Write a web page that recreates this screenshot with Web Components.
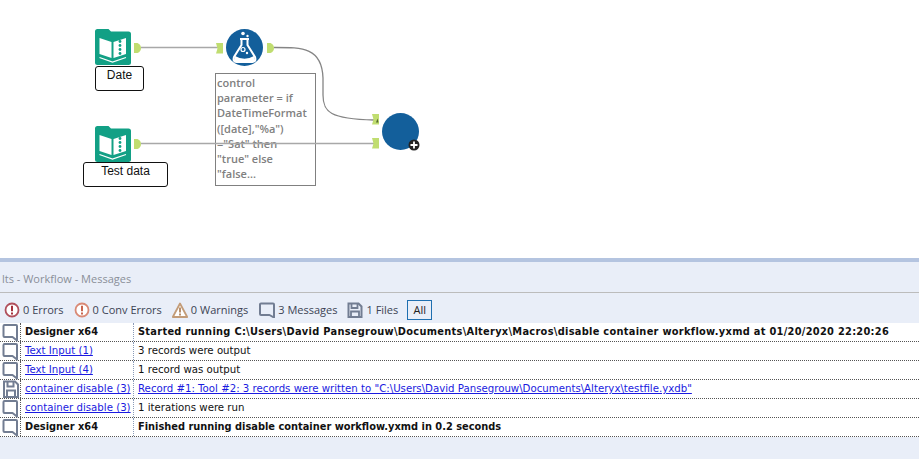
<!DOCTYPE html>
<html>
<head>
<meta charset="utf-8">
<title>Workflow - Messages</title>
<style>
  html, body { margin: 0; padding: 0; background: #fff; }
  body { width: 919px; height: 459px; overflow: hidden; display: flex; flex-direction: column; font-family: "Open Sans", sans-serif; }
</style>
</head>
<body>
<workflow-canvas>
  <tool-node kind="book" style="left:95px;top:29px"></tool-node>
  <tool-node kind="book" style="left:95px;top:126px"></tool-node>
  <tool-node kind="flask" style="left:226px;top:29px"></tool-node>
  <tool-node kind="macro" style="left:382px;top:113px"></tool-node>
  <node-label style="left:95px;top:66px;width:49px;height:25px">Date</node-label>
  <node-label style="left:83px;top:162px;width:85px;height:25px">Test data</node-label>
  <node-note style="left:215px;top:73px;width:98px;height:110px">control<br>parameter = if<br>DateTimeFormat<br>([date],"%a")<br>="Sat" then<br>"true" else<br>"false...</node-note>
</workflow-canvas>
<results-panel>
  <msg-filter slot="filters" kind="error" style="margin-left:4px">0 Errors</msg-filter>
  <msg-filter slot="filters" kind="conv" style="margin-left:10px">0 Conv Errors</msg-filter>
  <msg-filter slot="filters" kind="warn" style="margin-left:10px">0 Warnings</msg-filter>
  <msg-filter slot="filters" kind="msg" style="margin-left:11px">3 Messages</msg-filter>
  <msg-filter slot="filters" kind="file" style="margin-left:10px">1 Files</msg-filter>
  <msg-filter slot="filters" kind="all" style="margin-left:9px">All</msg-filter>

  <msg-row bold kind="msg" source="Designer x64"><span style="letter-spacing:.29px">Started running C:\Users\David Pansegrouw\Documents\Alteryx\Macros\disable container workflow.yxmd at 01/20/2020 22:20:26</span></msg-row>
  <msg-row kind="msg" source="Text Input (1)" link>3 records were output</msg-row>
  <msg-row kind="msg" source="Text Input (4)" link>1 record was output</msg-row>
  <msg-row kind="file" source="container disable (3)" link><a href="#">Record #1: Tool #2: 3 records were written to "C:\Users\David Pansegrouw\Documents\Alteryx\testfile.yxdb"</a></msg-row>
  <msg-row kind="msg" source="container disable (3)" link>1 iterations were run</msg-row>
  <msg-row bold kind="msg" source="Designer x64">Finished running disable container workflow.yxmd in 0.2 seconds</msg-row>
</results-panel>

<script>
const ICONS = {
  msg: `<svg width="18" height="18" viewBox="0 0 18 18"><path d="M3.500 2h11.500a1 1 0 0 1 1 1V17.500L11.500 14H3.500a1 1 0 0 1-1-1V3a1 1 0 0 1 1-1z" fill="#fff" stroke="#727d92" stroke-width="2" stroke-linejoin="round"/></svg>`,
  file: `<svg width="18" height="18" viewBox="0 0 18 18"><path d="M3 1.500h11l3 3V17H3z" fill="#fff" stroke="#727d92" stroke-width="2"/><path d="M6.500 2v4.500h6V2M6 17v-6.500h8V17" fill="none" stroke="#727d92" stroke-width="2"/></svg>`,
  bar_msg: `<svg width="16" height="16" viewBox="0 0 16 16"><path d="M2 1.500h12a1 1 0 0 1 1 1V15.500L10.500 13H2a1 1 0 0 1-1-1V2.500a1 1 0 0 1 1-1z" fill="none" stroke="#727d92" stroke-width="2" stroke-linejoin="round"/></svg>`,
  bar_file: `<svg width="16" height="16" viewBox="0 0 16 16"><path d="M1.500 1.500h10l3 3V15h-13z" fill="none" stroke="#727d92" stroke-width="2"/><path d="M4.500 2v4h6V2M4 15V9.500h8V15" fill="none" stroke="#727d92" stroke-width="1.800"/></svg>`,
  error: `<svg width="16" height="16" viewBox="0 0 16 16"><circle cx="8" cy="8" r="6.500" fill="#fff" stroke="#b0505c" stroke-width="1.800"/><path d="M8 3.800v5.400M8 10.500v2" stroke="#a5303c" stroke-width="2"/></svg>`,
  conv: `<svg width="16" height="16" viewBox="0 0 16 16"><circle cx="8" cy="8" r="6.500" fill="#fff" stroke="#d98a76" stroke-width="1.800"/><path d="M8 3.800v5.400M8 10.500v2" stroke="#c9654e" stroke-width="2"/></svg>`,
  warn: `<svg width="16" height="16" viewBox="0 0 16 16"><path d="M8 1.500 15.200 15H.8z" fill="#fff" stroke="#c39c78" stroke-width="1.800" stroke-linejoin="round"/><path d="M8 5.500v5M8 11.500v2" stroke="#a5744a" stroke-width="1.600"/></svg>`
};

class WorkflowCanvas extends HTMLElement {
  constructor() {
    super();
    this.attachShadow({ mode: 'open' });
    this.shadowRoot.innerHTML = `
      <style>
        :host { display: block; position: relative; height: 258px; background: #fff; flex: none; }
        svg { position: absolute; left: 0; top: 0; }
      </style>
      <slot></slot>
      <svg width="919" height="258" viewBox="0 0 919 258">
        <g fill="none" stroke="#a8a8a8" stroke-width="1.700">
          <path d="M141 47.500H218"/>
          <path d="M141 143.500H374"/>
        </g>
        <path d="M274 47.500C302 47.500 322 47 323 78V95C323 112 330 119 374 120" fill="none" stroke="#858585" stroke-width="1.300"/>
        ${this.port(134, 43, 'out')}
        ${this.port(134, 139, 'out')}
        ${this.port(216, 43, 'in')}
        ${this.port(267, 43, 'out')}
        ${this.port(372, 114, 'in')}
        ${this.port(372, 138, 'in')}
        <path d="M376 122.500l1.500-4 1 4z" fill="#556b2f"/>
        <circle cx="414" cy="145" r="5.500" fill="#222"/>
        <path d="M414 141.500v7M410.500 145h7" stroke="#fff" stroke-width="1.800"/>
      </svg>
    `;
  }

  port(x, y, dir) {
    if (dir === 'out') return `<path transform="translate(${x} ${y})" d="M0 0h3.500q3.500 1.500 3.500 5t-3.500 5H0z" fill="#c0dd70"/>`;
    return `<path transform="translate(${x} ${y})" d="M0 0h7v10.500H0l1.500-5z" fill="#c0dd70"/>`;
  }
}

class ToolNode extends HTMLElement {
  constructor() {
    super();
    this.attachShadow({ mode: 'open' });
  }

  connectedCallback() {
    const kind = this.getAttribute('kind');
    let art = '';
    if (kind === 'book') {
      art = `<path d="M0 2.500A2.500 2.500 0 0 1 2.500 0h11l2.500 2.500h17.500A2.500 2.500 0 0 1 36 5v28.500a2.500 2.500 0 0 1-2.500 2.500H2.500A2.500 2.500 0 0 1 0 33.500z" fill="#12a085"/>
        <path d="M4.500 9 16.500 13v16L4.500 25zM18.500 13l12.500-4v16l-12.500 4z" fill="#fff"/>
        <path d="M4.500 28.500 17.500 33 31 28.500" fill="none" stroke="#fff" stroke-width="1.200"/>
        <circle cx="25" cy="12.500" r="1.400" fill="#12a085"/><circle cx="25" cy="16.500" r="1.400" fill="#12a085"/>
        <circle cx="25" cy="20.500" r="1.400" fill="#12a085"/><circle cx="25" cy="24.500" r="1.400" fill="#12a085"/>`;
    } else if (kind === 'flask') {
      art = `<circle cx="18.500" cy="18.500" r="18.500" fill="#135f9b"/>
        <path d="M14 10h9M15.500 10v6L8 28q-1.500 4.500 2.500 5h16q4-.5 2.500-5L21.500 16v-6" fill="#135f9b" stroke="#fff" stroke-width="2"/>
        <path d="M9 27q9.500 5.500 19 0l1 4-2 2H10l-2-2z" fill="#fff"/>
        <circle cx="17" cy="20.500" r="2" fill="none" stroke="#fff" stroke-width="1.200"/>
        <circle cx="21" cy="24" r="1.200" fill="#fff"/>
        <circle cx="17" cy="4.500" r="1.800" fill="#fff"/><circle cx="21.500" cy="7" r="1.200" fill="#fff"/>`;
    } else {
      art = `<circle cx="18.500" cy="18.500" r="18.500" fill="#135f9b"/>`;
    }
    this.shadowRoot.innerHTML = `
      <style>
        :host { display: block; position: absolute; width: 37px; height: 38px; }
        svg { display: block; }
      </style>
      <svg width="37" height="38" viewBox="0 0 37 38">${art}</svg>
    `;
  }
}

class NodeLabel extends HTMLElement {
  constructor() {
    super();
    this.attachShadow({ mode: 'open' });
    this.shadowRoot.innerHTML = `
      <style>
        :host {
          display: block; position: absolute; box-sizing: border-box;
          border: 1px solid #111; border-radius: 3px; background: #fff;
          font: 12px/1 "Liberation Sans", sans-serif; color: #111;
          text-align: center; padding-top: 2px;
        }
      </style>
      <slot></slot>
    `;
  }
}

class NodeNote extends HTMLElement {
  constructor() {
    super();
    this.attachShadow({ mode: 'open' });
    this.shadowRoot.innerHTML = `
      <style>
        :host {
          display: block; position: absolute; box-sizing: content-box;
          border: 1px solid #808080;
          font: 600 11px/15.200px "Open Sans", sans-serif; color: #808080;
          padding: 1px 0 0 1px; overflow: hidden;
        }
      </style>
      <slot></slot>
    `;
  }
}

class ResultsPanel extends HTMLElement {
  constructor() {
    super();
    this.attachShadow({ mode: 'open' });
    this.shadowRoot.innerHTML = `
      <style>
        :host { display: flex; flex-direction: column; flex: 1; background: #e9eef8; border-top: 4px solid #b4c4e0; }
        .title {
          height: 31px; box-sizing: border-box; display: flex; align-items: center;
          padding-top: 2px; border-bottom: 1px solid #bcbcbc;
          font-size: 11px; color: #8a8f99; white-space: nowrap;
        }
        .title span { padding-left: 2px; }
        .filters { height: 30px; box-sizing: border-box; padding-top: 3px; display: flex; align-items: center; }
        .rows { background: #fff; display: flex; flex-direction: column; }
      </style>
      <div class="title"><span>lts - Workflow - Messages</span></div>
      <div class="filters"><slot name="filters"></slot></div>
      <div class="rows"><slot></slot></div>
    `;
  }
}

class MsgFilter extends HTMLElement {
  constructor() {
    super();
    this.attachShadow({ mode: 'open' });
  }

  connectedCallback() {
    const kind = this.getAttribute('kind');
    const boxed = kind === 'all';
    const icon = ICONS['bar_' + kind] || ICONS[kind] || '';
    this.shadowRoot.innerHTML = `
      <style>
        :host { display: flex; align-items: center; gap: 3px; font-size: 11px; color: #3c4454; white-space: nowrap; }
        svg { display: block; }
        .box { display: block; box-sizing: border-box; width: 25px; text-align: center; border: 1px solid #1f6fb0; height: 20px; line-height: 18px; color: #222; }
      </style>
      ${icon}
      <span class="${boxed ? 'box' : ''}"><slot></slot></span>
    `;
  }
}

class MsgRow extends HTMLElement {
  constructor() {
    super();
    this.attachShadow({ mode: 'open' });
  }

  connectedCallback() {
    const source = this.getAttribute('source');
    const link = this.hasAttribute('link');
    const bold = this.hasAttribute('bold');
    this.shadowRoot.innerHTML = `
      <style>
        :host {
          display: grid; grid-template-columns: 21px 113px 1fr; height: 19px; box-sizing: border-box;
          border-bottom: 1px dotted #555;
          font: ${bold ? 'bold 9.840px' : 'normal 10.200px'}/18px "DejaVu Sans", sans-serif; color: #111;
          white-space: nowrap;
        }
        .icon { padding-left: 1px; border-right: 1px dotted #555; }
        .icon svg { display: block; overflow: visible; }
        .src { border-right: 1px dotted #8a9bb8; padding-left: 4px; }
        .txt { padding-left: 4px; }
        a, ::slotted(a) { color: #1a1ae0; text-decoration: underline; }
      </style>
      <div class="icon">${ICONS[this.getAttribute('kind')]}</div>
      <div class="src">${link ? `<a href="#">${source}</a>` : source}</div>
      <div class="txt"><slot></slot></div>
    `;
  }
}

customElements.define('workflow-canvas', WorkflowCanvas);
customElements.define('tool-node', ToolNode);
customElements.define('node-label', NodeLabel);
customElements.define('node-note', NodeNote);
customElements.define('results-panel', ResultsPanel);
customElements.define('msg-filter', MsgFilter);
customElements.define('msg-row', MsgRow);
</script>
</body>
</html>
